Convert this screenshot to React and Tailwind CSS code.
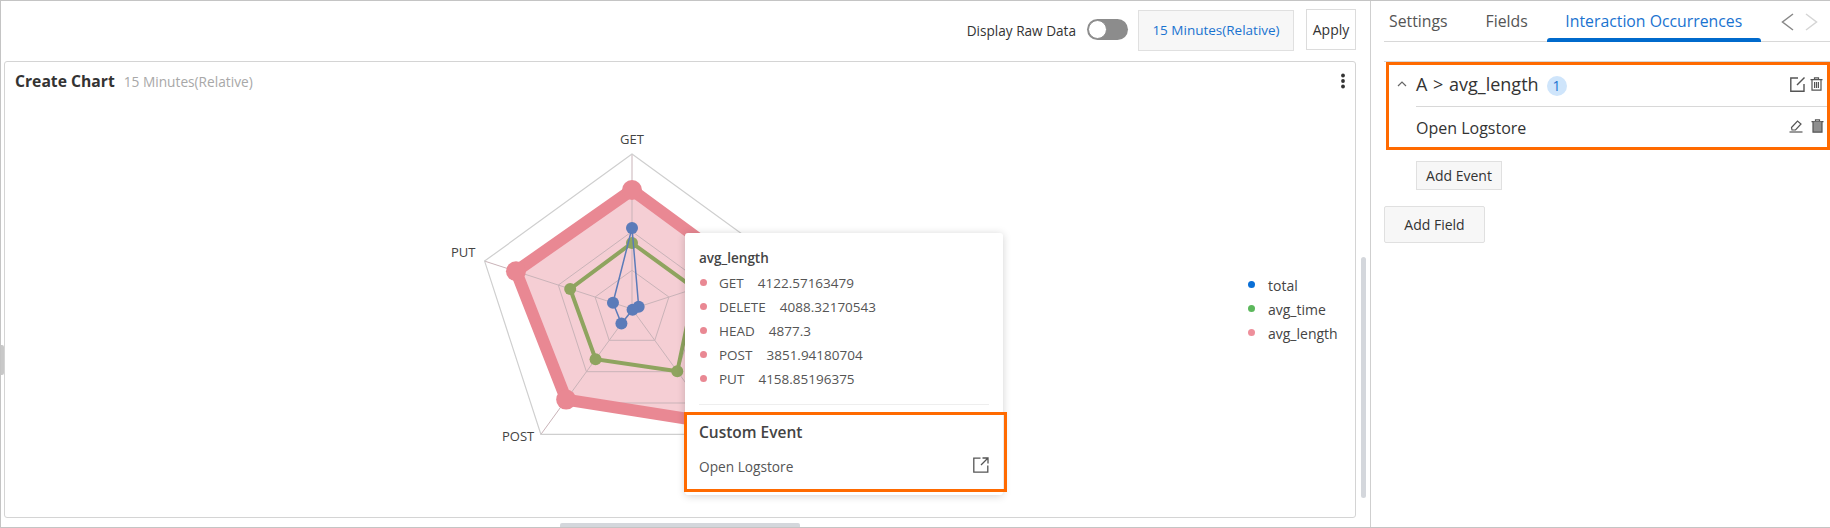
const FONT = "font-['Open_Sans','Noto_Sans',sans-serif]";

const CX = 631;
const CY = 308;
const deg = (i) => ((72 * i - 90) * Math.PI) / 180;
const pt = (r, i) => [CX + r * Math.cos(deg(i)), CY + r * Math.sin(deg(i))];
const ptsStr = (rs) => rs.map((r, i) => pt(r, i).map((n) => n.toFixed(1)).join(",")).join(" ");
const rings = [38.75, 77.5, 116.25];
const outer = [155, 155, 155, 155, 155];
const pink = [119, 118, 141, 112, 122];
const green = [66, 66, 77, 62, 65];
const blue = [81, 7, 1, 18, 20];

function Radar() {
  return (
    <svg className="w-[1363px] h-[526px] block" width="1363" height="526" viewBox="0 0 1363 526">
      <polygon points={ptsStr(pink)} fill="#f5ced4" stroke="none" />
      {rings.map((r) => (
        <polygon key={r} points={ptsStr([r, r, r, r, r])} fill="none" stroke="#c9b3b8" strokeWidth="1" />
      ))}
      {[0, 1, 2, 3, 4].map((i) => {
        const [x, y] = pt(155, i);
        return <line key={i} x1={CX} y1={CY} x2={x} y2={y} stroke="#c9b3b8" strokeWidth="1" />;
      })}
      <polygon points={ptsStr(outer)} fill="none" stroke="#cfcfcf" strokeWidth="1.2" />
      <polygon points={ptsStr(pink)} fill="none" stroke="#e98893" strokeWidth="12" strokeLinejoin="miter" />
      {pink.map((r, i) => {
        const [x, y] = pt(r, i);
        return <circle key={i} cx={x} cy={y} r="10" fill="#e98893" />;
      })}
      <polygon points={ptsStr(green)} fill="none" stroke="#8fa45f" strokeWidth="4" />
      {green.map((r, i) => {
        const [x, y] = pt(r, i);
        return <circle key={i} cx={x} cy={y} r="6" fill="#8fa45f" />;
      })}
      <polygon points={ptsStr(blue)} fill="none" stroke="#5b7bb9" strokeWidth="1.5" />
      {blue.map((r, i) => {
        const [x, y] = pt(r, i);
        return <circle key={i} cx={x} cy={y} r="6" fill="#5b7bb9" />;
      })}
      <g fontFamily="'Open Sans','Noto Sans',sans-serif" fontSize="13" fill="#444">
        <text x="631" y="143" textAnchor="middle">GET</text>
        <text x="450" y="256">PUT</text>
        <text x="501" y="440">POST</text>
      </g>
    </svg>
  );
}

function Tooltip() {
  const rows = [
    ["GET", "4122.57163479"],
    ["DELETE", "4088.32170543"],
    ["HEAD", "4877.3"],
    ["POST", "3851.94180704"],
    ["PUT", "4158.85196375"],
  ];
  return (
    <div className="absolute left-[684px] top-[232px] w-[318px] h-[262px] bg-white rounded-[3px] shadow-[0_1px_8px_rgba(0,0,0,0.18)] text-[#555]">
      <div className="px-[14px] pt-[15px]">
        <div className="text-[13.5px] leading-[20px] font-semibold text-[#444]">avg_length</div>
        <div className="mt-[3px] flex flex-col">
          {rows.map(([k, v]) => (
            <div key={k} className="h-[24px] flex items-center text-[13.5px] text-[#555]">
              <span className="w-[7px] h-[7px] rounded-full bg-[#e98893] ml-[1px] mr-[12px] -mt-[2px]" />
              <span className="mr-[14px]">{k}</span>
              <span>{v}</span>
            </div>
          ))}
        </div>
        <div className="mt-[13px] h-[1px] bg-[#eeeeee]" />
        <div className="mt-[16px] text-[15.5px] leading-[22px] font-semibold text-[#444]">Custom Event</div>
        <div className="mt-[14px] flex items-center justify-between text-[13.7px] text-[#555]">
          <span>Open Logstore</span>
          <svg className="-mt-[4px]" width="16" height="16" viewBox="0 0 16 16" fill="none" stroke="#555" strokeWidth="1.3">
            <path d="M7.5 1.2H.8v14h14V8.5" />
            <path d="M9.5 1h5.5v5.5M15 1 8 8" />
          </svg>
        </div>
      </div>
      <div className="absolute -left-[1px] top-[179px] w-[323px] h-[80px] border-[3px] border-[#ff6a00]" />
    </div>
  );
}

function Legend() {
  const items = [
    ["total", "bg-[#0a6fd6]"],
    ["avg_time", "bg-[#5cb85c]"],
    ["avg_length", "bg-[#ee8f9b]"],
  ];
  return (
    <div className="flex flex-col text-[14px] text-[#444]">
      {items.map(([t, c]) => (
        <div key={t} className="h-[24px] flex items-center">
          <span className={`w-[7px] h-[7px] rounded-full ${c} mr-[13px] -mt-[1px]`} />
          <span>{t}</span>
        </div>
      ))}
    </div>
  );
}

function Trash({ solid }) {
  return (
    <svg className="block" width="13" height="14" viewBox="0 0 13 14" fill="none" stroke="#555" strokeWidth="1.2">
      <path d="M.5 2.6h12M4.5 2.6V.8h4v1.8" />
      <path d="M2 2.6v10.6h9V2.6" fill={solid ? "#8f8f8f" : "none"} />
      {!solid && <path d="M4.6 5v6M6.5 5v6M8.4 5v6" />}
    </svg>
  );
}

export default function App() {
  return (
    <div className={`${FONT} relative w-[1830px] h-[528px] bg-white flex border-t-[1px] border-b-[1px] border-l-[1px] border-[#c4c4c4] overflow-hidden`}>
      <div className="relative w-[1369px] h-full shrink-0">
        <div className="h-[60px] flex items-start justify-end pr-[14px] pt-[8px]">
          <span className="text-[13.6px] text-[#333] mt-[12px] mr-[11px]">Display Raw Data</span>
          <div className="w-[41px] h-[21px] rounded-full bg-[#8c8c8c] mt-[10px] mr-[10px] flex items-center pl-[1px]">
            <span className="w-[19px] h-[19px] rounded-full bg-white border border-[#8c8c8c]" />
          </div>
          <div className="w-[156px] h-[41px] mt-[1px] bg-[#f7f7f7] border border-[#e0e0e0] flex items-center justify-center text-[13.5px] text-[#1a73d0] mr-[12px]">15 Minutes(Relative)</div>
          <div className="w-[50px] h-[41px] bg-white border border-[#dcdcdc] flex items-center justify-center text-[14px] text-[#333] pb-[1px]">Apply</div>
        </div>
        <div className="relative ml-[3px] w-[1352px] h-[457px] border border-[#d4d4d4] rounded-[3px]">
          <div className="h-[40px] flex items-center pl-[10px] pr-[9px]">
            <span className="text-[15.7px] font-bold text-[#333]">Create Chart</span>
            <span className="text-[13.7px] text-[#a8a8a8] ml-[9px]">15 Minutes(Relative)</span>
            <svg className="ml-auto -mt-[3px]" width="6" height="16" viewBox="0 0 6 16" fill="#333">
              <circle cx="3" cy="2.5" r="1.9" />
              <circle cx="3" cy="8" r="1.9" />
              <circle cx="3" cy="13.5" r="1.9" />
            </svg>
          </div>
          <div className="flex pl-[1243px] pt-[171px]">
            <Legend />
          </div>
        </div>
        {/* chart drawing and tooltip lie over the card */}
        <div className="absolute left-0 top-0 pointer-events-none">
          <Radar />
          <Tooltip />
        </div>
        <div className="absolute left-[1360px] top-[256px] w-[5px] h-[241px] rounded-full bg-[#d4d7dc]" />
        <div className="absolute left-[559px] bottom-[0px] w-[240px] h-[4px] rounded-t-[2px] bg-[#d4d7dc]" />
        <div className="absolute left-0 top-[344px] w-[3px] h-[30px] rounded-r-[2px] bg-[#c8c8c8]" />
      </div>

      <div className="flex-1 border-l border-[#cfcfcf] pl-[13px]">
        <div className="h-[41px] flex border-b border-[#d8d8d8] text-[15.8px]">
          <span className="text-[#555] ml-[5px] mt-[9px]">Settings</span>
          <span className="text-[#555] ml-[38px] mt-[9px]">Fields</span>
          <div className="relative ml-[19px] w-[214px] text-center text-[#1a73d0] pt-[9px]">
            Interaction Occurrences
            <div className="absolute left-0 right-0 -bottom-[1px] h-[4px] rounded-t-[3px] bg-[#006acc]" />
          </div>
          <svg className="ml-[20px] mt-[12px]" width="13" height="18" viewBox="0 0 13 18" fill="none" stroke="#888" strokeWidth="1.5">
            <path d="M12 1 1.5 9 12 17" />
          </svg>
          <svg className="ml-[11px] mt-[12px]" width="13" height="18" viewBox="0 0 13 18" fill="none" stroke="#d5d5d5" strokeWidth="1.5">
            <path d="M1 1l10.5 8L1 17" />
          </svg>
        </div>
        <div className="mt-[19px] border-t border-[#d8d8d8]">
          <div className="relative ml-[2px] w-[444px] h-[88px] border-[3px] border-[#ff6a00]">
            <div className="h-[41px] pb-[3px] flex items-center text-[18px] text-[#333] relative">
              <svg className="ml-[8px] mr-[9px]" width="10" height="6" viewBox="0 0 10 6" fill="none" stroke="#666" strokeWidth="1.2">
                <path d="M1 5l4-4 4 4" />
              </svg>
              <span className="[word-spacing:1px]">A &gt; avg_length</span>
              <span className="ml-[8px] mt-[3px] w-[20px] h-[20px] rounded-full bg-[#cfe5fb] text-[#1a73d0] text-[14px] flex items-center justify-center">1</span>
              <svg className="ml-auto mr-[5px]" width="15" height="15" viewBox="0 0 15 15" fill="none" stroke="#555" strokeWidth="1.4">
                <path d="M8 1H.8v13.2H14V7" />
                <path d="M14.5.5 7 8" />
              </svg>
              <span className="mr-[4px]"><Trash /></span>
            </div>
            <div className="ml-[27px] h-[1px] bg-[#d8d8d8]" />
            <div className="h-[41px] ml-[27px] flex items-center text-[16px] text-[#333]">
              <span>Open Logstore</span>
              <svg className="ml-auto mr-[8px] -mt-[4px]" width="14" height="14" viewBox="0 0 14 14" fill="none" stroke="#555" strokeWidth="1.2">
                <path d="M2.5 8.5 8.5 2l3.5 3L6.5 11H3z" />
                <path d="M0.5 13h13" />
              </svg>
              <span className="mr-[3px] -mt-[4px]"><Trash solid /></span>
            </div>
          </div>
          <button className="block ml-[32px] mt-[11px] w-[86px] h-[29px] bg-[#f7f7f7] border border-[#e0e0e0] text-[14px] text-[#333]">Add Event</button>
          <button className="block mt-[16px] w-[101px] h-[37px] bg-[#f7f7f7] border border-[#e0e0e0] rounded-[2px] text-[14px] text-[#333]">Add Field</button>
        </div>
      </div>
    </div>
  );
}
